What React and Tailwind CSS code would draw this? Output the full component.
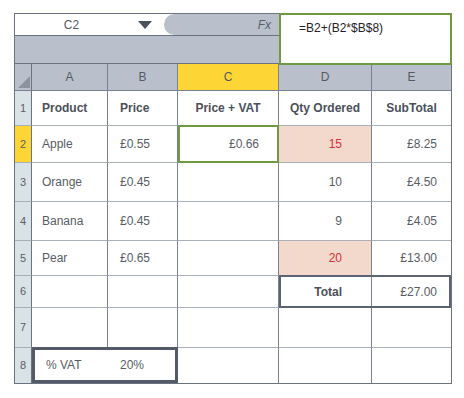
import React from "react";

const COLW = "grid-cols-[17px_76px_70px_101px_93px_79px]";
const ROWH = "grid-rows-[27px_35px_37px_39px_39px_35px_32px_40px_35px]";
const RS = ["row-start-1","row-start-2","row-start-3","row-start-4","row-start-5","row-start-6","row-start-7","row-start-8","row-start-9"];
const CS = ["col-start-1","col-start-2","col-start-3","col-start-4","col-start-5","col-start-6"];

const data = [
  ["Product", "Price", "Price + VAT", "Qty Ordered", "SubTotal"],
  ["Apple", "£0.55", "£0.66", "15", "£8.25"],
  ["Orange", "£0.45", "", "10", "£4.50"],
  ["Banana", "£0.45", "", "9", "£4.05"],
  ["Pear", "£0.65", "", "20", "£13.00"],
  ["", "", "", "Total", "£27.00"],
  ["", "", "", "", ""],
  ["", "", "", "", ""],
];

export default function App() {
  const cells = [];
  ["", "A", "B", "C", "D", "E"].forEach((h, c) => {
    const bg = c === 3 ? "bg-[#fdd535]" : "bg-[#b9c0cb]";
    cells.push(
      <div
        key={"h" + c}
        className={`${RS[0]} ${CS[c]} ${bg} ${c < 5 ? "border-r" : ""} ${c === 0 ? "border-[#6b7280]" : "border-[#7a818e]"} border-b border-b-[#7a818e] relative flex items-center justify-center text-[12px] text-[#555a62]`}
      >
        {c === 0 ? (
          <svg className="absolute left-[3px] bottom-[2px]" width="12" height="12" viewBox="0 0 12 12">
            <polygon points="0,12 12,12 12,0" fill="#8b949c" />
          </svg>
        ) : (
          h
        )}
      </div>
    );
  });
  data.forEach((row, r) => {
    const rr = r + 1;
    const last = r === data.length - 1;
    cells.push(
      <div
        key={"r" + r}
        className={`${RS[rr]} ${CS[0]} ${r === 1 ? "bg-[#fdd535]" : "bg-[#d9e2e5]"} border-r border-r-[#6b7280] ${last ? "" : "border-b border-b-[#aab0b8]"} flex items-center justify-center text-[11px] text-[#5a5f66]`}
      >
        {rr}
      </div>
    );
    row.forEach((v, c) => {
      const col = c + 1;
      let align = "";
      if (c === 0) align = "justify-start pl-[10px]";
      else if (c === 1) align = "justify-start pl-[12px]";
      else if (c === 2) align = r === 0 ? "justify-center" : "justify-end pr-[19px]";
      else if (c === 3) align = r === 0 ? "justify-center" : "justify-end pr-[29px]";
      else align = r === 0 ? "justify-center" : "justify-end pr-[14px]";
      const peach = c === 3 && (r === 1 || r === 4);
      const bold = r === 0 || (r === 5 && c === 3);
      const color = peach ? "text-[#cf3139]" : bold ? "text-[#4b505a]" : "text-[#575c64]";
      cells.push(
        <div
          key={r + "-" + c}
          className={`${RS[rr]} ${CS[col]} ${peach ? "bg-[#f3d9cb]" : "bg-white"} ${c < 4 ? "border-r border-r-[#7a818e]" : ""} ${last ? "" : "border-b border-b-[#aab0b8]"} flex items-center ${align} text-[12px] ${color} ${bold ? "font-bold" : ""}`}
        >
          {v}
        </div>
      );
    });
  });

  return (
    <div className="w-[464px] h-[398px] bg-white pl-[14px] pt-[13px]" style={{ fontFamily: '"Liberation Sans", Arial, sans-serif' }}>
      <div className="relative w-[438px] border border-[#6b7280]">
        <div className="h-[22px] border-b border-[#6b7280] flex">
          <div className="w-[149px] flex items-center bg-white">
            <div className="w-[113px] text-center text-[12px] text-[#555a62]">C2</div>
            <svg width="14" height="8" viewBox="0 0 14 8" className="ml-[10px]">
              <polygon points="0,0 14,0 7,8" fill="#4a505c" />
            </svg>
          </div>
          <div className="w-[115px] h-[21px] rounded-l-full bg-[#b9c0cc] flex items-center justify-end pr-[8px] text-[12px] italic text-[#5a5f68]">
            Fx
          </div>
          <div className="flex-1" />
        </div>
        <div className="h-[28px] bg-[#b9c0cc] border-b border-[#6b7280]" />
        <div className={`grid ${COLW} ${ROWH}`}>
          {cells}
          <div className={`${RS[2]} ${CS[3]} -mt-px border-2 border-[#6f9b40] pointer-events-none`} />
          <div className={`${RS[6]} col-start-5 col-span-2 -mt-px border-2 border-[#5b6270] pointer-events-none`} />
          <div className={`${RS[8]} col-start-2 col-span-2 -mt-px bg-white border-[3px] border-[#545b68] flex items-center text-[12px] text-[#575c64]`}>
            <span className="w-[85px] pl-[11px]">% VAT</span>
            <span>20%</span>
          </div>
        </div>
        <div className="absolute top-[-1px] left-[264px] right-[-1px] h-[52px] border-2 border-[#6f9b40] bg-white pl-[18px] pt-[4px] text-[12px] font-medium text-[#1f2227]">
          =B2+(B2*$B$8)
        </div>
      </div>
    </div>
  );
}
